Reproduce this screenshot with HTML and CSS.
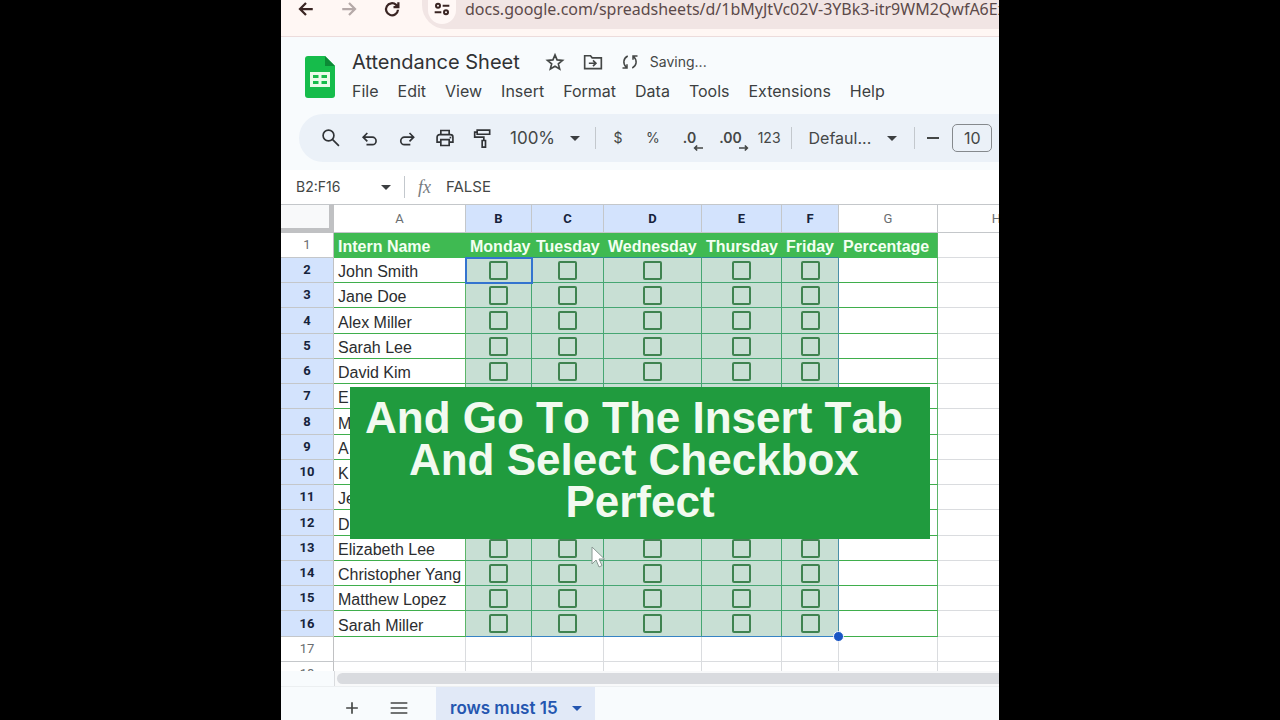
FILE: index.html
```
<!DOCTYPE html>
<html lang="en">
<head>
<meta charset="utf-8">
<title>Attendance Sheet</title>
<link rel="stylesheet" href="styles.css">
</head>
<body>
<main class="frame">
  <header class="browser">
    <button class="nav" aria-label="Back"><svg viewBox="0 0 24 24"><path d="M21 12H4M12 4l-8 8 8 8"/></svg></button>
    <button class="nav nav-off" aria-label="Forward"><svg viewBox="0 0 24 24"><path d="M3 12h17M12 4l8 8-8 8"/></svg></button>
    <button class="nav" aria-label="Reload"><svg viewBox="0 0 24 24"><path d="M20 13a8 8 0 1 1-2.500-6.500L20 9M20.500 3v6.500H14"/></svg></button>
    <div class="address">
      <button class="site" aria-label="Site information"><svg viewBox="0 0 24 24"><circle cx="6" cy="7" r="3"/><path d="M13 7h10M1 17h10"/><circle cx="18" cy="17" r="3"/></svg></button>
      <span class="url">docs.google.com/spreadsheets/d/1bMyJtVc02V-3YBk3-itr9WM2QwfA6Ex</span>
    </div>
  </header>

  <section class="doc-head">
    <svg class="logo" viewBox="0 0 30 42"><path fill="#16bc4b" d="M3 0h17l10 10v29a3 3 0 0 1-3 3H3a3 3 0 0 1-3-3V3a3 3 0 0 1 3-3z"/><path fill="#0c8a36" d="M20 0l10 10H20z"/><path fill="#e9fbe9" fill-rule="evenodd" d="M5 16h20v15H5zM8 19v3h5.500v-3zM16.500 19v3H22v-3zM8 25v3h5.500v-3zM16.500 25v3H22v-3z"/></svg>
    <div class="doc-info">
      <div class="title-row">
        <h1 class="title">Attendance Sheet</h1>
        <button class="icon" aria-label="Star"><svg viewBox="0 0 24 24"><path d="M12 3.500l2.500 6 6.500.5-5 4.200 1.600 6.300-5.600-3.400-5.600 3.400L8 14.200 3 10l6.500-.5z"/></svg></button>
        <button class="icon" aria-label="Move"><svg viewBox="0 0 24 24"><path d="M2 4.500h7l2 2.500h11v13H2zM7 13.500h8M12 10l3.500 3.500L12 17"/></svg></button>
        <span class="saving"><svg class="sync" viewBox="0 0 24 24"><path d="M9 4C3 7 2 14 7 19M2 20h6v-5M15 20c6-3 7-10 2-15M22 4h-6v5"/></svg>Saving...</span>
      </div>
      <nav class="menus">
        <button>File</button><button>Edit</button><button>View</button><button>Insert</button><button>Format</button><button>Data</button><button>Tools</button><button>Extensions</button><button>Help</button>
      </nav>
    </div>
  </section>

  <section class="toolbar">
    <div class="tools">
      <button class="icon" aria-label="Search"><svg viewBox="0 0 24 24"><circle cx="9" cy="9" r="6.500"/><path d="M14 14l7.500 7.500"/></svg></button>
      <button class="icon" aria-label="Undo"><svg viewBox="0 0 24 24"><path d="M10 6l-5 5 5 5M5 11h11a4.500 4.500 0 0 1 0 9H9"/></svg></button>
      <button class="icon" aria-label="Redo"><svg viewBox="0 0 24 24"><path d="M15 6l5 5-5 5M20 11H9a4.500 4.500 0 0 0 0 9h7"/></svg></button>
      <button class="icon" aria-label="Print"><svg viewBox="0 0 24 24"><path d="M7 8V3h10v5M7 17H2.500V11a3 3 0 0 1 3-3h13a3 3 0 0 1 3 3v6H17M7 14h10v7H7z"/><path d="M17.500 11.500h2"/></svg></button>
      <button class="icon" aria-label="Paint format"><svg viewBox="0 0 24 24"><path d="M5 2.500h15v5H5zM5 5H2v6h11v4M11 15h4v8h-4z"/></svg></button>
    </div>
    <button class="zoom">100%<i class="caret"></i></button>
    <i class="rule"></i>
    <div class="formats">
      <button class="fmt">$</button>
      <button class="fmt">%</button>
      <button class="fmt decimal">.0<svg viewBox="0 0 12 8"><path d="M12 4H2M5 1L2 4l3 3"/></svg></button>
      <button class="fmt decimal">.00<svg viewBox="0 0 12 8"><path d="M0 4h10M7 1l3 3-3 3"/></svg></button>
      <button class="fmt">123</button>
    </div>
    <i class="rule"></i>
    <button class="font">Defaul...<i class="caret"></i></button>
    <i class="rule"></i>
    <button class="minus" aria-label="Decrease font size"><svg viewBox="0 0 14 14"><path d="M1 7h12"/></svg></button>
    <input class="size" type="text" value="10" aria-label="Font size">
  </section>

  <section class="formula">
    <button class="range">B2:F16<i class="caret"></i></button>
    <i class="rule"></i>
    <label class="fx" for="formula">fx</label>
    <input class="value" id="formula" type="text" value="FALSE">
  </section>

  <section class="grid">
    <table class="sheet">
      <colgroup><col class="c-num"><col class="c-a"><col class="c-b"><col class="c-c"><col class="c-d"><col class="c-e"><col class="c-f"><col class="c-g"><col class="c-h"></colgroup>
      <thead><tr><th class="corner"></th><th>A</th><th class="on">B</th><th class="on">C</th><th class="on">D</th><th class="on">E</th><th class="on">F</th><th>G</th><th>H</th></tr></thead>
      <tbody id="rows"></tbody>
    </table>
  </section>
  <div class="scroll"><div class="thumb"></div></div>

  <footer class="tabs">
    <button class="icon" aria-label="Add sheet"><svg viewBox="0 0 24 24"><path d="M12 5v14M5 12h14"/></svg></button>
    <button class="icon" aria-label="All sheets"><svg viewBox="0 0 24 24"><path d="M2 6h20M2 12h20M2 18h20"/></svg></button>
    <button class="tab">rows must 15<i class="caret"></i></button>
  </footer>

  <p class="caption">And Go To The Insert Tab&nbsp;<br>And Select Checkbox&nbsp;<br>Perfect</p>
  <svg class="pointer" viewBox="0 0 14 22"><path d="M1 1v17l4-4 3 7 3-1.500-3-6.500h5.500z"/></svg>
</main>
<script src="sheet.js"></script>
</body>
</html>
```
FILE: styles.css
```
* { box-sizing: border-box; }
body { margin: 0; background: #000; }
button, input { font: inherit; color: inherit; background: none; border: 0; padding: 0; margin: 0; }
svg { display: block; fill: none; stroke: currentColor; stroke-width: 2; }

.frame {
  position: relative;
  display: flex;
  flex-direction: column;
  height: 100vh;
  min-height: 480px;
  aspect-ratio: 718 / 720;
  max-width: 100%;
  margin: 0 auto;
  overflow: hidden;
  background: #f8fbfd;
  color: #444746;
  font: 16px/20px Inter, Roboto, sans-serif;
}

.browser {
  display: flex;
  flex: none;
  align-items: flex-start;
  height: 37px;
  padding-left: 16px;
  gap: 25px;
  background: #fff7f4;
  border-bottom: 1px solid #ecdcdc;
  color: #3a2523;
}
.nav { width: 18px; height: 18px; flex: none; }
.nav svg { width: 18px; height: 18px; stroke-width: 3; }
.nav-off { color: #b5a9a8; }
.address {
  display: flex;
  flex: 1;
  align-items: flex-start;
  min-width: 0;
  height: 29px;
  margin-left: -4px;
  padding-left: 6px;
  gap: 9px;
  background: #f1e5e4;
  border-radius: 0 0 0 24px;
}
.site { display: grid; place-items: center; flex: none; width: 28px; height: 24px; padding-bottom: 6px; background: #fff8f6; border-radius: 0 0 14px 14px; }
.site svg { width: 16px; height: 18px; stroke-width: 3; }
.url { white-space: nowrap; color: #5c4a4a; font: 16px/18px "Noto Sans", "Open Sans", sans-serif; }

.doc-head { display: flex; flex: none; gap: 17px; height: 77px; padding: 12px 0 0 24px; background: #f8fbfd; }
.logo { width: 30px; height: 42px; margin-top: 7px; stroke: none; }
.title-row { display: flex; align-items: center; gap: 18px; height: 26px; }
.title { margin: 0 7px 0 0; color: #303234; font: 400 20px/26px Inter, Roboto, sans-serif; }
.icon { flex: none; }
.icon svg { width: 20px; height: 20px; }
.saving { display: flex; align-items: center; gap: 11px; font-size: 14px; }
.sync { width: 18px; height: 18px; }
.menus { display: flex; gap: 19px; margin-top: 6px; color: #3c3f41; }

.toolbar {
  display: flex;
  flex: none;
  align-items: center;
  height: 48px;
  margin-left: 18px;
  padding-left: 22px;
  background: #ebf1f8;
  border-radius: 24px 0 0 24px;
}
.tools { display: flex; gap: 18px; color: #303336; }
.zoom, .font { display: flex; align-items: center; gap: 16px; }
.zoom { margin-left: 17px; gap: 15px; font-size: 17px; }
.caret { flex: none; border: 5px solid transparent; border-top-color: #3c3f41; border-bottom: 0; }
.rule { flex: none; width: 1px; height: 22px; background: #c3c8cd; }
.zoom + .rule { margin-left: 15px; }
.formats { display: flex; align-items: center; gap: 23px; padding: 0 10px 0 17px; }
.fmt { min-width: 10px; font-size: 14px; }
.fmt:last-child { margin-left: -7px; }
.decimal { position: relative; font-weight: 600; }
.decimal svg { position: absolute; right: -7px; bottom: -4px; width: 10px; height: 8px; }
.font { margin: 0 17px; }
.minus { margin: 0 12px 0 11px; }
.minus svg { width: 14px; height: 14px; }
.size { width: 40px; height: 28px; border: 1px solid #85898d; border-radius: 5px; text-align: center; }

.formula { display: flex; flex: none; align-items: center; height: 34px; margin-top: 8px; background: #fff; font-size: 15px; }
.range { display: flex; align-items: center; justify-content: space-between; width: 110px; padding-left: 15px; font-size: 14px; }
.formula .rule { margin: 0 13px; }
.fx { width: 18px; color: #777b80; font: italic 18px/20px "Liberation Serif", serif; }
.value { flex: 1; min-width: 0; margin-left: 10px; }

.grid { flex: 1; min-height: 0; overflow: hidden; background: #fff; }
.sheet { width: 775px; table-layout: fixed; border-collapse: separate; border-spacing: 0; color: #2b2d2f; font: 16px/20px "Liberation Sans", Arial, sans-serif; }
.c-num { width: 53px; }
.c-a { width: 132px; }
.c-b { width: 66px; }
.c-c { width: 72px; }
.c-d { width: 98px; }
.c-e { width: 80px; }
.c-f { width: 57px; }
.c-g { width: 99px; }
.c-h { width: 118px; }
.sheet th, .sheet td { padding: 0; white-space: nowrap; border-right: 1px solid #dadcdf; border-bottom: 1px solid #dadcdf; }
.sheet thead th { height: 29px; border-top: 1px solid #c4c7ca; border-right-color: #c4c7ca; border-bottom-color: #c4c7ca; color: #6a6d70; font: 400 13px/20px Roboto, sans-serif; }
.sheet thead .on { background: #d3e3fd; color: #16233c; font-weight: 700; }
.sheet thead .corner { background: #f8f9fa; border-right: 5px solid #c0c1c3; border-bottom: 5px solid #c0c1c3; }
.sheet tbody tr { height: 25px; }
.sheet tbody tr:nth-child(4n) { height: 26px; }
.sheet tbody th { border-right-color: #c0c1c3; border-bottom-color: #c4c7ca; color: #6a6d70; font: 400 13px/18px Roboto, sans-serif; }
.sheet .picked th { background: #d3e3fd; color: #16233c; font-weight: 700; }
.sheet .data { border-right-color: #5bb568; border-bottom-color: #3fae4c; }
.sheet .name { padding: 4px 0 0 4px; line-height: 18px; }
.sheet .heading td.data { padding: 3px 0 0 4px; background: #3fba52; border-color: #3fba52; color: #f3fff1; font-weight: 700; line-height: 18px; }
.sheet .heading td.data:nth-child(8) { border-right-color: #5bb568; }
.sheet .heading td.mark { border-bottom-color: #2e8c92; }
.sheet .check { position: relative; background: #c8dfd4; border-right-color: #46a672; border-bottom-color: #46a672; text-align: center; line-height: 0; }
.sheet .check.end { border-right-color: #4a8fa8; }
.sheet .last .check { border-bottom-color: #3683c4; }
.sheet .active { z-index: 1; outline: 2px solid #3474cf; outline-offset: -1px; }
.check input { appearance: none; width: 19px; height: 19px; border: 2px solid #3f8350; border-radius: 2px; vertical-align: top; }
.handle { position: absolute; right: -6px; bottom: -6px; z-index: 1; width: 11px; height: 11px; border: 1px solid #fff; border-radius: 50%; background: #1a56c4; }

.scroll { flex: none; height: 15px; margin-left: 53px; padding: 2px 0 0 2px; background: #f8f9fa; border-left: 1px solid #dadcdf; }
.thumb { height: 11px; border-radius: 6px 0 0 6px; background: #d9dbdf; }

.tabs { display: flex; flex: none; height: 34px; padding-left: 61px; border-top: 1px solid #eceff1; background: #f8fbfd; align-items: flex-start; }
.tabs .icon { margin-top: 11px; }
.tabs .icon + .icon { margin-left: 27px; }
.tab { display: flex; align-items: center; gap: 14px; height: 42px; margin-left: 27px; padding: 0 13px 0 14px; background: #e1e9f7; color: #2456b0; font-size: 17px; font-weight: 600; }
.tab .caret { border-top-color: #2456b0; }

.caption {
  position: absolute;
  left: 69px;
  right: 69px;
  top: 387px;
  z-index: 2;
  height: 152px;
  margin: 0;
  padding-top: 10px;
  background: #209b3e;
  color: #f2faf0;
  font: 700 44px/42px "Liberation Sans", Arial, sans-serif;
  font-kerning: none;
  text-align: center;
  white-space: nowrap;
}
.pointer { position: absolute; left: 310px; top: 546px; z-index: 3; width: 14px; height: 22px; fill: #fff; stroke: #8a9a94; stroke-width: 1; }
```
FILE: sheet.js
```
const headings = ["Intern Name", "Monday", "Tuesday", "Wednesday", "Thursday", "Friday", "Percentage"];
const names = ["John Smith", "Jane Doe", "Alex Miller", "Sarah Lee", "David Kim", "E", "M", "A", "K", "Je", "D", "Elizabeth Lee", "Christopher Yang", "Matthew Lopez", "Sarah Miller"];
const body = document.getElementById("rows");

function addRow(number, rowClass, cells) {
  body.insertAdjacentHTML("beforeend", `<tr class="${rowClass}"><th>${number}</th>${cells}<td></td></tr>`);
}

addRow(1, "heading", headings.map((text, i) => `<td class="data${i > 0 && i < 6 ? " mark" : ""}">${text}</td>`).join(""));

names.forEach((name, r) => {
  const last = r === names.length - 1;
  const checks = headings.slice(1, 6).map((day, i) => {
    const cls = "check" + (i === 4 ? " end" : "") + (r === 0 && i === 0 ? " active" : "");
    const handle = last && i === 4 ? '<span class="handle"></span>' : "";
    return `<td class="${cls}"><input type="checkbox" aria-label="${name}, ${day}">${handle}</td>`;
  }).join("");
  addRow(r + 2, last ? "picked last" : "picked", `<td class="data name">${name}</td>${checks}<td class="data"></td>`);
});

addRow(17, "", "<td></td>".repeat(7));
addRow(18, "", "<td></td>".repeat(7));
```
